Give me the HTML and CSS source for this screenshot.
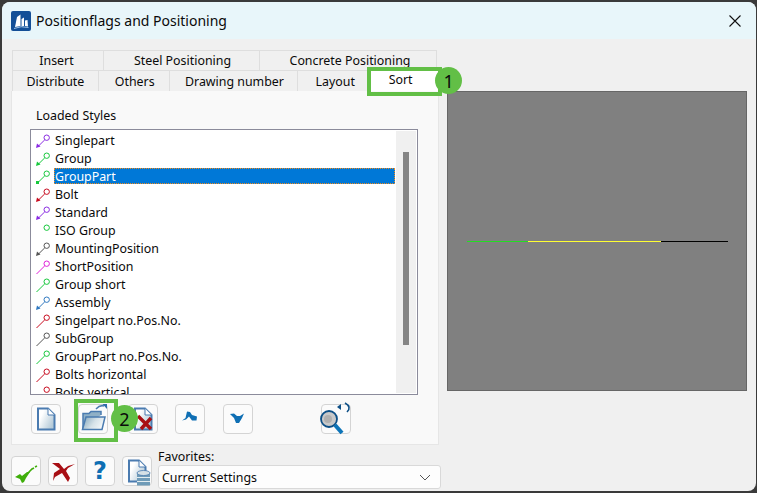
FILE: index.html
```html
<!DOCTYPE html>
<html lang="en">
<head>
<meta charset="utf-8">
<title>Positionflags and Positioning</title>
<link rel="stylesheet" href="styles.css">
</head>
<body>
<svg class="defs" width="0" height="0" aria-hidden="true">
  <symbol id="flag-arrow" viewBox="0 0 16 16">
    <circle cx="11.7" cy="5.7" r="2.7" fill="#fff" stroke="currentColor" stroke-width="1"/>
    <path d="M9.8 7.8 3 14.5" fill="none" stroke="currentColor" stroke-width="1"/>
    <path d="M1 16 2 11.5 5.5 14.5Z" fill="currentColor"/>
  </symbol>
  <symbol id="flag-square" viewBox="0 0 16 16">
    <circle cx="11.7" cy="5.7" r="2.7" fill="#fff" stroke="currentColor" stroke-width="1"/>
    <path d="M9.8 7.8 3 14.5" fill="none" stroke="currentColor" stroke-width="1"/>
    <rect x="1" y="13" width="3" height="3" fill="currentColor"/>
  </symbol>
  <symbol id="flag-line" viewBox="0 0 16 16">
    <circle cx="11.7" cy="5.7" r="2.7" fill="#fff" stroke="currentColor" stroke-width="1"/>
    <path d="M9.8 7.8 1 16.5" fill="none" stroke="currentColor" stroke-width="1"/>
  </symbol>
  <symbol id="flag-dot" viewBox="0 0 16 16">
    <circle cx="11.7" cy="5.7" r="2.7" fill="#fff" stroke="currentColor" stroke-width="1"/>
  </symbol>
  <symbol id="doc" viewBox="0 0 30 30">
    <path d="M7 4.5H17L23.5 11V25.5H7Z" fill="url(#docfill)" stroke="#4a7bb0" stroke-width="2"/>
    <path d="M17 4.5V11H23.5" fill="#fff" stroke="#4a7bb0" stroke-width="1"/>
  </symbol>
  <linearGradient id="docfill" x1="0" y1="0" x2="1" y2="0.6">
    <stop offset="0.3" stop-color="#ffffff"/><stop offset="1" stop-color="#b4cad8"/>
  </linearGradient>
  <linearGradient id="folderfill" x1="0" y1="0" x2="1" y2="0.4">
    <stop offset="0" stop-color="#7ea2b8"/><stop offset="0.6" stop-color="#d6e2e8"/><stop offset="1" stop-color="#f2f6f8"/>
  </linearGradient>
</svg>

<div class="dialog">
  <header class="titlebar">
    <svg class="logo" width="20" height="20" viewBox="0 0 20 20" aria-hidden="true">
      <rect width="20" height="20" rx="2" fill="#134f97"/>
      <path d="M4 16 6 6 9.5 3.5V15Z" fill="#fff"/>
      <path d="M10.5 15.5V8L13 6.5V15Z M14 15V9.5L16.5 9 17 15.5Z" fill="#fff"/>
      <path d="M3 17.5Q10 14.5 17.5 16.5" fill="none" stroke="#9cc0e4" stroke-width="1"/>
    </svg>
    <h1 class="title">Positionflags and Positioning</h1>
    <svg class="close" width="12" height="12" viewBox="0 0 12 12" aria-hidden="true">
      <path d="M0.5 0.5 11.5 11.5M11.5 0.5 0.5 11.5" stroke="#111" stroke-width="1.1" fill="none"/>
    </svg>
  </header>

  <div class="content">
    <div class="leftcol">
      <div class="tabs">
        <div class="tabrow">
          <div class="tab t-insert">Insert</div>
          <div class="tab t-steel">Steel Positioning</div>
          <div class="tab t-concrete">Concrete Positioning</div>
        </div>
        <div class="tabrow">
          <div class="tab t-dist">Distribute</div>
          <div class="tab t-others">Others</div>
          <div class="tab t-draw">Drawing number</div>
          <div class="tab t-layout">Layout</div>
          <div class="tab t-sort">Sort
            <span class="callout callout-sort"></span>
            <span class="badge badge-sort">1</span>
          </div>
        </div>
      </div>

      <section class="panel">
        <div class="group-label">Loaded Styles</div>
        <div class="listbox">
          <div class="rows">
            <div class="row"><svg class="flag c-purple"><use href="#flag-arrow"/></svg><span class="label">Singlepart</span></div>
            <div class="row"><svg class="flag c-green"><use href="#flag-arrow"/></svg><span class="label">Group</span></div>
            <div class="row selected"><svg class="flag c-green"><use href="#flag-square"/></svg><span class="label">GroupPart</span></div>
            <div class="row"><svg class="flag c-red"><use href="#flag-arrow"/></svg><span class="label">Bolt</span></div>
            <div class="row"><svg class="flag c-purple"><use href="#flag-arrow"/></svg><span class="label">Standard</span></div>
            <div class="row"><svg class="flag c-green"><use href="#flag-dot"/></svg><span class="label">ISO Group</span></div>
            <div class="row"><svg class="flag c-gray"><use href="#flag-arrow"/></svg><span class="label">MountingPosition</span></div>
            <div class="row"><svg class="flag c-magenta"><use href="#flag-line"/></svg><span class="label">ShortPosition</span></div>
            <div class="row"><svg class="flag c-green"><use href="#flag-line"/></svg><span class="label">Group short</span></div>
            <div class="row"><svg class="flag c-blue"><use href="#flag-arrow"/></svg><span class="label">Assembly</span></div>
            <div class="row"><svg class="flag c-red"><use href="#flag-line"/></svg><span class="label">Singelpart no.Pos.No.</span></div>
            <div class="row"><svg class="flag c-gray"><use href="#flag-line"/></svg><span class="label">SubGroup</span></div>
            <div class="row"><svg class="flag c-green"><use href="#flag-line"/></svg><span class="label">GroupPart no.Pos.No.</span></div>
            <div class="row"><svg class="flag c-red"><use href="#flag-line"/></svg><span class="label">Bolts horizontal</span></div>
            <div class="row"><svg class="flag c-red"><use href="#flag-dot"/></svg><span class="label">Bolts vertical</span></div>
          </div>
          <div class="scrollbar"><div class="thumb"></div></div>
        </div>

        <div class="toolbar">
          <button class="btn" type="button" aria-label="New">
            <svg class="ico" viewBox="0 0 30 30"><use href="#doc"/></svg>
          </button>
          <button class="btn b-open" type="button" aria-label="Open">
            <svg class="ico" viewBox="0 0 30 30">
              <path d="M5 24V9.5H11L13 7.5H23V11" fill="#8fb0c6" stroke="#4a7bb0" stroke-width="1.5"/>
              <path d="M4.5 25.5 8 13H27L24 25.5Z" fill="url(#folderfill)" stroke="#4a7bb0" stroke-width="1.5"/>
              <path d="M18 5Q22 0.5 26 2" fill="none" stroke="#4a7bb0" stroke-width="1.5"/>
              <path d="M24.5 0H29V5Z" fill="#2f6ca8"/>
            </svg>
            <span class="callout callout-open"></span>
            <span class="badge badge-open">2</span>
          </button>
          <button class="btn b-del" type="button" aria-label="Delete">
            <svg class="ico" viewBox="0 0 30 30">
              <use href="#doc"/>
              <path d="M10 12 23 25M23 14 13 25" stroke="#a80f14" stroke-width="3.4" fill="none"/>
            </svg>
          </button>
          <button class="btn b-up" type="button" aria-label="Move up">
            <svg class="ico" viewBox="0 0 30 30">
              <path d="M7 16.5 10.5 14 12 7.5 15 8 17 11 22 12.5 21.5 16.5 17 16.5 14 12.5 11 15.5Z" fill="#0f6fb4"/>
            </svg>
          </button>
          <button class="btn b-down" type="button" aria-label="Move down">
            <svg class="ico" viewBox="0 0 30 30">
              <path d="M7 10 11 9.5 14 12 17 12 21 9.5 19 14 16 19 13 19 11 14Z" fill="#0f6fb4"/>
            </svg>
          </button>
          <button class="btn b-search" type="button" aria-label="Preview">
            <svg class="ico ico-over" viewBox="0 0 30 30">
              <path d="M16 3 20 0V6Z" fill="#0d4f86"/>
              <path d="M24 -1Q31 3 26 8" fill="none" stroke="#0d4f86" stroke-width="1.6"/>
              <circle cx="8" cy="15" r="8" fill="#c9c9c9" stroke="#0d4f86" stroke-width="1.8"/>
              <circle cx="7" cy="15" r="4" fill="#b0b0b0"/>
              <path d="M14 21 21 29" stroke="#0c74b8" stroke-width="4"/>
            </svg>
          </button>
        </div>
      </section>

      <footer class="footer">
        <button class="btn" type="button" aria-label="OK">
          <svg class="ico" viewBox="0 0 30 30">
            <path d="M4 21 9 18 11 20 16 16 19 16 15 22 13 26 11 27 9 23Z" fill="#3fae0a"/>
            <path d="M17 17 21 13 23 12M24 11 26 10" fill="none" stroke="#3fae0a" stroke-width="1.6"/>
          </svg>
        </button>
        <button class="btn" type="button" aria-label="Cancel">
          <svg class="ico" viewBox="0 0 30 30">
            <path d="M4 7 11 7 16 13 20 10 27 8 20 12 18 15 22 22 20 26 14 17 7 21 5 25 6 17 12 13Z" fill="#a80f14"/>
          </svg>
        </button>
        <button class="btn help" type="button" aria-label="Help">?</button>
        <button class="btn" type="button" aria-label="Save">
          <svg class="ico ico-over" viewBox="0 0 30 30">
            <path d="M7 4.5H17L23.5 11V25.5H7Z" fill="url(#docfill)" stroke="#4a7bb0" stroke-width="2"/>
            <path d="M17 4.5V11H23.5" fill="#fff" stroke="#4a7bb0" stroke-width="1"/>
            <path d="M15 17V29.5H28V17Z" fill="#6f9bb8"/>
            <ellipse cx="21.5" cy="17" rx="6.5" ry="2.5" fill="#d5e0e6" stroke="#4a7bb0" stroke-width="0.8"/>
            <path d="M15 21.5H28M15 25.5H28" stroke="#e2ecf0" stroke-width="1"/>
          </svg>
        </button>
        <div class="favorites">
          <div class="fav-label">Favorites:</div>
          <div class="select">
            <span>Current Settings</span>
            <svg width="12" height="7" viewBox="0 0 12 7" aria-hidden="true">
              <path d="M1 1 6 6 11 1" fill="none" stroke="#555" stroke-width="1"/>
            </svg>
          </div>
        </div>
      </footer>
    </div>

    <aside class="preview">
      <div class="stroke">
        <span class="seg seg-green"></span><span class="seg seg-yellow"></span><span class="seg seg-black"></span>
      </div>
    </aside>
  </div>
</div>
</body>
</html>
```

FILE: styles.css
```css
* { box-sizing: border-box; }
html, body { margin: 0; height: 100%; }
body {
  width: 757px;
  height: 493px;
  overflow: hidden;
  background: #3a3a3a;
  padding: 2px 1px 2px 2px;
  font-family: "Noto Sans", "Open Sans", sans-serif;
  font-size: 12.4px;
  color: #0a0a0a;
}
.defs { position: absolute; }

.dialog {
  height: 489px;
  background: #f0f0f0;
  border-radius: 8px;
  overflow: hidden;
  display: flex;
  flex-direction: column;
}

.titlebar {
  flex: none;
  height: 37px;
  background: #e8f6fa;
  display: flex;
  align-items: center;
  padding: 0 15px 0 9px;
}
.logo { flex: none; }
.title {
  margin: 0 0 0 5px;
  flex: 1;
  font-size: 14px;
  font-weight: 400;
  white-space: nowrap;
}
.close { flex: none; }

.content {
  flex: 1;
  display: flex;
  padding: 11px 0 0 9px;
}
.leftcol {
  flex: none;
  width: 430px;
  display: flex;
  flex-direction: column;
}

.tabs { height: 41px; }
.tabrow { display: flex; height: 21px; margin-left: 1px; }
.tabrow:first-child { height: 20px; }
.tab {
  position: relative;
  display: flex;
  align-items: center;
  justify-content: center;
  border: 1px solid #dedede;
  border-bottom: 0;
  border-left-width: 0;
  padding-left: 2px;
  white-space: nowrap;
  background: #f0f0f0;
}
.tab:first-child { border-left-width: 1px; }
.t-insert { width: 92px; padding: 0 3px 0 0; }
.t-steel { width: 156px; }
.t-concrete { width: 177px; padding-left: 4px; }
.t-dist { width: 87px; padding: 0; }
.t-others { width: 71px; }
.t-draw { width: 129px; }
.t-layout { width: 71px; padding-left: 4px; }
.t-sort {
  width: 72px;
  background: #fff;
  align-items: flex-start;
  padding: 0 8px 0 0;
  z-index: 2;
}

.callout {
  position: absolute;
  border: 4px solid #62bf46;
  pointer-events: none;
}
.callout-sort { left: -2px; top: -4px; width: 75px; height: 29px; }
.callout-open { left: -5px; top: -6px; width: 44px; height: 43px; }
.badge {
  position: absolute;
  width: 27px;
  height: 27px;
  border-radius: 50%;
  background: #62bf46;
  color: #0a0a0a;
  font-size: 18px;
  display: flex;
  align-items: center;
  justify-content: center;
  z-index: 3;
}
.badge-sort { left: 66px; top: -4px; }
.badge-open { left: 32px; top: 0; }

.panel {
  width: 428px;
  height: 354px;
  background: #f9f9f9;
  border: 1px solid #e6e6e6;
  border-top: 0;
  padding: 17px 0 0 18px;
}
.group-label { height: 21px; line-height: 16px; padding-left: 6px; }

.listbox {
  width: 388px;
  height: 266px;
  background: #fff;
  border: 1px solid #8b8b9b;
  display: flex;
  overflow: hidden;
}
.rows {
  flex: 1;
  min-width: 0;
  overflow: hidden;
  padding: 2px 0 0 4px;
}
.row {
  height: 18px;
  display: flex;
  align-items: flex-start;
}
.flag { flex: none; width: 16px; height: 16px; margin-right: 4px; overflow: visible; }
.label { flex: 1; height: 16px; line-height: 18px; white-space: nowrap; }
.selected .label {
  background: #0078d7;
  color: #fff;
  border: 1px dotted #f08a1c;
  line-height: 16px;
  margin-left: -1px;
}
.c-purple { color: #8a2be2; }
.c-green { color: #16c83c; }
.c-red { color: #c80a1e; }
.c-gray { color: #555; }
.c-magenta { color: #e020d8; }
.c-blue { color: #2f78c0; }

.scrollbar {
  flex: none;
  width: 20px;
  margin: 1px;
  background: #f0f0f0;
  padding: 21px 0 48px 7px;
}
.thumb { width: 6px; height: 100%; background: #858585; }

.toolbar {
  display: flex;
  margin-top: 9px;
  padding-left: 1px;
}
.btn {
  position: relative;
  flex: none;
  width: 30px;
  height: 30px;
  padding: 0;
  background: #fbfbfb;
  border: 1px solid #d4d4d4;
  border-radius: 4px;
  font: inherit;
}
.ico { position: absolute; left: -1px; top: -1px; width: 30px; height: 30px; overflow: visible; }
.b-open { margin-left: 17px; }
.b-del { margin-left: 20px; }
.b-up { margin-left: 17px; }
.b-down { margin-left: 18px; }
.b-search { margin-left: 68px; }

.footer {
  display: flex;
  margin-top: 11px;
  gap: 7px;
}
.help {
  color: #0f6fb4;
  font-family: "DejaVu Sans", sans-serif;
  font-weight: 700;
  font-size: 24px;
  line-height: 28px;
}
.favorites { margin: 1px 0 0 -1px; width: 283px; }
.fav-label { height: 8px; line-height: 0; }
.select {
  height: 24px;
  background: #fdfdfd;
  border: 1px solid #d9d9d9;
  border-radius: 3px;
  display: flex;
  align-items: center;
  justify-content: space-between;
  padding: 0 9px 0 3px;
}

.preview {
  flex: none;
  width: 300px;
  height: 300px;
  margin: 41px 0 0 6px;
  background: #808080;
  border: 1px solid #666;
  display: flex;
  align-items: center;
  justify-content: center;
}
.stroke { display: flex; height: 1px; margin-left: 1px; margin-top: 1px; }
.seg { height: 1px; display: block; }
.seg-green { width: 61px; background: #22dd22; }
.seg-yellow { width: 133px; background: #ffff33; }
.seg-black { width: 67px; background: #000; }
```
